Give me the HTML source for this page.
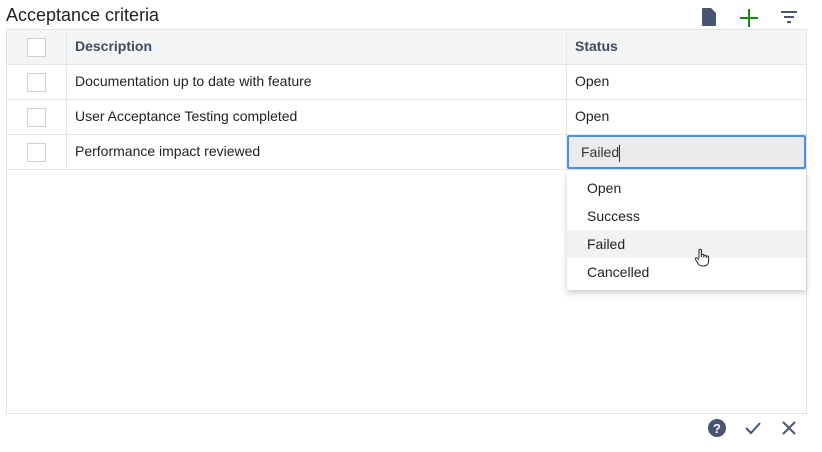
<!DOCTYPE html>
<html><head><style>
body{margin:0;width:822px;height:452px;background:#fff;font-family:"Liberation Sans",sans-serif;position:relative;overflow:hidden;color:#222}
.a{position:absolute}
.title{left:6px;top:5px;font-size:18px;color:#222}
.box{left:6px;top:29px;width:799px;height:383px;border:1px solid #e1e3e8}
.row{position:absolute;left:0;width:799px;height:34px;border-bottom:1px solid #e4e6ea}
.cb{position:absolute;left:20px;top:8px;width:17px;height:17px;border:1px solid #d0d0d0;background:#fff}
.t{position:absolute;top:8px;font-size:14px;color:#222}
.vl{position:absolute;top:0;width:1px;height:140px;background:#e4e6ea}
.dd{left:567px;top:170px;width:239px;height:120px;background:#fff;box-shadow:0 3px 6px rgba(0,0,0,.2)}
.it{position:absolute;left:0;width:239px;height:28px;font-size:14px;line-height:28px;padding-left:20px;box-sizing:border-box;color:#222}
</style></head><body>
<div class="a title">Acceptance criteria</div>
<svg class="a" style="left:700px;top:7px" width="18" height="20" viewBox="0 0 18 20"><path d="M3 1h8l5 5v12a1 1 0 0 1-1 1H3a1 1 0 0 1-1-1V2a1 1 0 0 1 1-1z" fill="#475573"/></svg>
<svg class="a" style="left:739px;top:8px" width="20" height="20"><path d="M10 1v18M1 10h18" stroke="#118a11" stroke-width="2"/></svg>
<svg class="a" style="left:780px;top:10px" width="18" height="14"><path d="M1 2h16M4 7h10M7 12h4" stroke="#475573" stroke-width="2"/></svg>
<div class="a box">
 <div class="row" style="top:0;background:#f4f5f7"><div class="cb"></div><div class="t" style="left:68px;font-weight:bold;color:#3f4b66">Description</div><div class="t" style="left:568px;font-weight:bold;color:#3f4b66">Status</div></div>
 <div class="row" style="top:35px"><div class="cb"></div><div class="t" style="left:68px">Documentation up to date with feature</div><div class="t" style="left:568px">Open</div></div>
 <div class="row" style="top:70px"><div class="cb"></div><div class="t" style="left:68px">User Acceptance Testing completed</div><div class="t" style="left:568px">Open</div></div>
 <div class="row" style="top:105px"><div class="cb"></div><div class="t" style="left:68px">Performance impact reviewed</div></div>
 <div class="vl" style="left:59px"></div><div class="vl" style="left:559px"></div>
</div>
<div class="a" style="left:567px;top:135px;width:239px;height:34px;box-sizing:border-box;border:2px solid #4a90e2;border-radius:2px;background:#ebebeb;font-size:14px;line-height:30px;padding-left:12px;color:#333">Failed<span style="display:inline-block;width:1px;height:17px;background:#333;vertical-align:middle"></span></div>
<div class="a dd">
 <div class="it" style="top:4px">Open</div>
 <div class="it" style="top:32px">Success</div>
 <div class="it" style="top:60px;background:#f2f2f2">Failed</div>
 <div class="it" style="top:88px">Cancelled</div>
</div>
<svg class="a" style="left:694px;top:248px" width="16" height="19" viewBox="0 0 16 19"><path d="M5 10V2.5a1.2 1.2 0 0 1 2.4 0V9M7.4 9V7.5a1.2 1.2 0 0 1 2.4 0V9.5M9.8 9.5V8.3a1.2 1.2 0 0 1 2.4 0V10M12.2 10V9.2a1.2 1.2 0 0 1 2.4 0V13c0 3-2 5-4.5 5H8c-2 0-3-1-4-2.5L1.5 11.5a1.2 1.2 0 0 1 2-1.3L5 12" fill="#fff" stroke="#222" stroke-width="1"/></svg>
<svg class="a" style="left:707px;top:418px" width="20" height="20"><circle cx="10" cy="10" r="9" fill="#475573"/><text x="10" y="15" font-size="13" font-weight="bold" fill="#fff" text-anchor="middle" font-family="Liberation Sans">?</text></svg>
<svg class="a" style="left:744px;top:421px" width="18" height="14"><path d="M2 7l5 5 9-10" stroke="#475573" stroke-width="2" fill="none"/></svg>
<svg class="a" style="left:781px;top:420px" width="16" height="16"><path d="M2 2l12 12M14 2L2 14" stroke="#475573" stroke-width="2"/></svg>
</body></html>
